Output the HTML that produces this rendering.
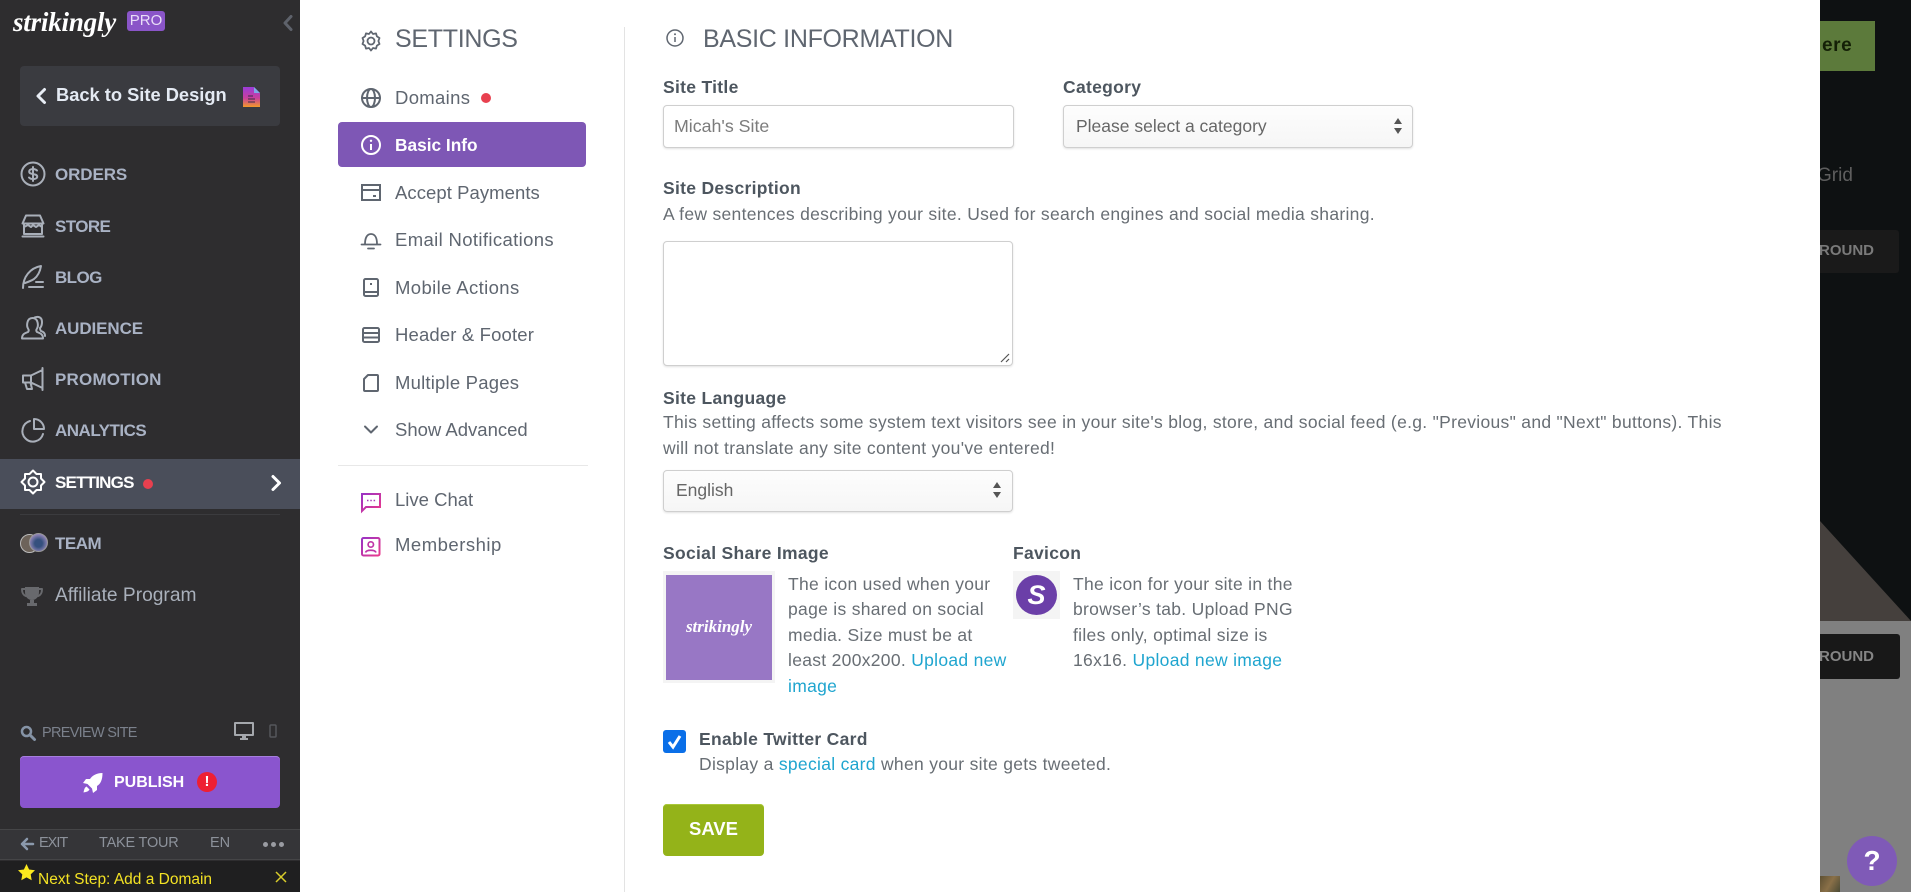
<!DOCTYPE html>
<html><head><meta charset="utf-8"><title>Settings</title>
<style>
html,body{margin:0;padding:0}
body{width:1911px;height:892px;overflow:hidden;position:relative;background:#fff;font-family:"Liberation Sans",sans-serif}
.a{position:absolute}
.t{position:absolute;white-space:nowrap;line-height:20px;height:20px}
svg{position:absolute;overflow:visible}
.s{fill:none;stroke-linecap:round;stroke-linejoin:round}
.n{color:#a9b2c4;font-weight:bold;font-size:17px;left:55px;letter-spacing:-.1px}
.i{stroke:#a9afb9;stroke-width:2}
.m{color:#5f6670;font-size:18.5px;left:395px}
.g{stroke:#5f6670;stroke-width:2}
.l{color:#4d565f;font-weight:bold;font-size:17.5px;left:663px;letter-spacing:.3px}
.h{color:#686e74;font-size:17.5px;letter-spacing:.3px}
.c{color:#1fa5cf}
.box{position:absolute;box-sizing:border-box;border:1px solid #cfcfcf;border-radius:4px;box-shadow:0 1px 2px rgba(0,0,0,.12)}
.sel{background:linear-gradient(#fdfdfd,#f6f6f6)}
</style></head><body>

<!-- right background strip -->
<div class="a" style="left:1820px;top:0;width:91px;height:892px;background:#0e1112"></div>
<div class="a" style="left:1820px;top:21px;width:55px;height:50px;background:#5c7a3b"></div>
<div class="t" style="left:1822px;top:36px;color:#142006;font-weight:bold;font-size:19px;letter-spacing:.6px">ere</div>
<div class="t" style="left:1817px;top:166px;width:70px;color:#5e5e5e;font-size:19px;clip-path:inset(0 0 0 3px)">Grid</div>
<div class="a" style="left:1820px;top:230px;width:79px;height:43px;background:#1a1a1a;border-radius:0 3px 3px 0"></div>
<div class="t" style="left:1819px;top:241px;color:#7a7a7a;font-weight:bold;font-size:15px;clip-path:inset(0 0 0 1px)">ROUND</div>
<svg style="left:0;top:0" width="1911" height="892"><polygon points="1820,521 1911,621 1820,621" fill="#45403d"/></svg>
<div class="a" style="left:1820px;top:621px;width:91px;height:271px;background:#808080"></div>
<div class="a" style="left:1820px;top:634px;width:80px;height:45px;background:#181818;border-radius:0 3px 3px 0"></div>
<div class="t" style="left:1819px;top:647px;color:#858585;font-weight:bold;font-size:15px;clip-path:inset(0 0 0 1px)">ROUND</div>
<div class="a" style="left:1820px;top:876px;width:20px;height:16px;background:linear-gradient(120deg,#5d5033,#8a7048,#4a4a35)"></div>
<div class="a" style="left:1847px;top:836px;width:50px;height:50px;border-radius:50%;background:#7f5ab7;color:#fff;font-weight:bold;font-size:28px;line-height:50px;text-align:center">?</div>

<!-- sidebar -->
<div class="a" style="left:0;top:0;width:300px;height:892px;background:#2e2d2f"></div>
<div class="t" style="left:13px;top:10px;font-family:'Liberation Serif',serif;font-style:italic;font-weight:bold;font-size:27px;color:#fff;line-height:24px;height:24px;letter-spacing:-.2px">strikingly</div>
<div class="a" style="left:127px;top:11px;width:38px;height:20px;background:#8a55c8;border-radius:3px;color:#e9ddf7;font-size:15px;line-height:20px;text-align:center">PRO</div>
<svg style="left:282px;top:15px" width="12" height="16"><path class="s" d="M9 1.500 3 8l6 6.500" stroke="#5e626b" stroke-width="3"/></svg>

<div class="a" style="left:20px;top:66px;width:260px;height:60px;background:#3a3b40;border-radius:4px"></div>
<svg style="left:35px;top:87px" width="12" height="18"><path class="s" d="M9.500 2.500 3 9l6.500 6.500" stroke="#e8edf5" stroke-width="3"/></svg>
<div class="t" style="left:56px;top:85px;color:#e4eaf3;font-weight:bold;font-size:18.3px">Back to Site Design</div>
<svg style="left:243px;top:87px" width="18" height="20"><defs><linearGradient id="gd" x1="0" y1="0" x2="0" y2="1"><stop offset="0" stop-color="#9a3cd8"/><stop offset=".55" stop-color="#c83f9e"/><stop offset="1" stop-color="#f29a28"/></linearGradient></defs><path d="M0 0h11l6 6v14H0z" fill="url(#gd)"/><path d="M11 0l6 6h-6z" fill="#7fa8e8"/><path d="M5 9h5M5 12h7M5 15h7" stroke="#3a2a4a" stroke-width="1"/></svg>

<!-- ORDERS -->
<svg style="left:20px;top:161px" width="26" height="26"><circle class="s i" cx="13" cy="13" r="11.500" stroke-width="2.500"/><path class="s i" d="M17 9.500c-1-1-2.300-1.500-4-1.500-2.200 0-3.800 1-3.800 2.600 0 3.600 8 1.400 8 5 0 1.500-1.700 2.500-4.200 2.500-1.700 0-3.100-.6-4-1.600M13 6v14"/></svg>
<div class="t n" style="top:165px">ORDERS</div>
<!-- STORE -->
<svg style="left:21px;top:214px" width="24" height="24"><path class="s i" stroke-width="1.800" d="M5 1.500h14l3.500 8H1.500zM3 9.500V20h18V9.500M3 13l4-2 3 2 2-2 3 2 3-2 3 2M1.500 22.500h21"/></svg>
<div class="t n" style="top:217px;letter-spacing:-.6px">STORE</div>
<!-- BLOG -->
<svg style="left:21px;top:265px" width="24" height="24"><path class="s i" d="M2 23C2 12 9 3 20 1c-1 6-3 10-7 13-3 2-6 3-9 4M22 22H8M22 17h-7"/></svg>
<div class="t n" style="top:268px;letter-spacing:-.6px">BLOG</div>
<!-- AUDIENCE -->
<svg style="left:21px;top:316px" width="25" height="24"><path class="s i" d="M1 22.500c0-4 2-5 6-6.500 1-1 1-2 0-3.500-1.500-2.500-1.500-10.500 4.500-10.500S17.500 10 16 12.500c-1 1.500-1 2.500 0 3.500 4 1.500 6 2.500 6 6.500zM13.500 1.500C17 0 21 1 21 6c0 3-1 5-2 6 0 1 0 2 1 3 2 .8 4 1.500 4 5"/></svg>
<div class="t n" style="top:319px">AUDIENCE</div>
<!-- PROMOTION -->
<svg style="left:21px;top:367px" width="24" height="24"><path class="s i" d="M21.500 1v22M21.500 3 10 8.500H2v7h8L21.500 21M4 15.500l2 6.500h5l-1.500-6.500M10 8.500v7"/></svg>
<div class="t n" style="top:370px;letter-spacing:.2px">PROMOTION</div>
<!-- ANALYTICS -->
<svg style="left:21px;top:418px" width="24" height="24"><path class="s i" d="M9 3a10.500 10.500 0 1 0 13 13M13 1a10 10 0 0 1 10 10H13z"/></svg>
<div class="t n" style="top:421px;letter-spacing:-.5px">ANALYTICS</div>
<!-- SETTINGS -->
<div class="a" style="left:0;top:459px;width:300px;height:50px;background:#4a4e5a"></div>
<svg style="left:20px;top:469px" width="26" height="26"><path class="s" stroke="#fff" stroke-width="2" d="M13 1.500 16.500 5H21v4.500L24.500 13 21 16.500V21h-4.500L13 24.500 9.500 21H5v-4.500L1.500 13 5 9.500V5h4.500z"/><circle class="s" stroke="#fff" stroke-width="2" cx="13" cy="13" r="4.500"/></svg>
<div class="t n" style="top:473px;color:#fff;letter-spacing:-.8px">SETTINGS</div>
<div class="a" style="left:143px;top:479px;width:10px;height:10px;border-radius:50%;background:#e8404f"></div>
<svg style="left:270px;top:474px" width="12" height="18"><path class="s" d="M3 2.500 9.500 9 3 15.500" stroke="#fff" stroke-width="3"/></svg>
<div class="a" style="left:20px;top:514px;width:260px;height:1px;background:#3b3b3e"></div>
<!-- TEAM -->
<div class="a" style="left:20px;top:534px;width:17px;height:17px;border-radius:50%;background:#6d635a;border:1px solid #bbb"></div>
<div class="a" style="left:29px;top:533px;width:17px;height:17px;border-radius:50%;background:radial-gradient(circle at 50% 55%,#35507e 30%,#8f84b5 70%);border:1px solid #999"></div>
<div class="t n" style="top:534px;letter-spacing:-.5px">TEAM</div>
<!-- Affiliate -->
<svg style="left:21px;top:586px" width="22" height="22"><path d="M4 1h14v5c0 5-3 8-7 8S4 11 4 6z" fill="#68696d"/><path class="s" d="M4 3H1c0 4 1 6 4 7M18 3h3c0 4-1 6-4 7" stroke="#68696d" stroke-width="2"/><path d="M9 14h4v3h3v3H6v-3h3z" fill="#68696d"/></svg>
<div class="t" style="left:55px;top:586px;color:#a9b0bb;font-size:19.2px">Affiliate Program</div>
<!-- preview -->
<svg style="left:20px;top:725px" width="16" height="16"><circle class="s" cx="6.500" cy="6.500" r="4.500" stroke="#8593a6" stroke-width="2.500"/><path class="s" d="M10 10l4.500 4.500" stroke="#8593a6" stroke-width="3"/></svg>
<div class="t" style="left:42px;top:723px;color:#7b818c;font-size:14.500px;letter-spacing:-.7px">PREVIEW SITE</div>
<svg style="left:234px;top:722px" width="20" height="18"><rect class="s" x="1" y="1" width="18" height="12" stroke="#a5a8ad" stroke-width="2"/><path d="M8 14h4v2h2v2H6v-2h2z" fill="#a5a8ad"/></svg>
<svg style="left:269px;top:724px" width="8" height="14"><rect x="1" y="1" width="6" height="12" rx="1" fill="none" stroke="#55575c" stroke-width="1.500"/></svg>
<!-- publish -->
<div class="a" style="left:20px;top:756px;width:260px;height:52px;background:#8a55ce;border-radius:4px;box-shadow:inset 0 1px 0 #a67fdd"></div>
<svg style="left:83px;top:773px" width="20" height="20"><path d="M19.500 0C13 0 9 3 7 6H3L0 10l4.500 1 4.500 4.500 1 4.500 4-3v-4c3.500-2 5.500-6 5.500-13z" fill="#fff"/><path d="M3.500 13.500C1.500 14.500 1 17 .5 19.500c2.500-.5 5-1 6-3z" fill="#fff"/></svg>
<div class="t" style="left:114px;top:773px;color:#fff;font-weight:bold;font-size:16px">PUBLISH</div>
<div class="a" style="left:197px;top:772px;width:20px;height:20px;border-radius:50%;background:#ee1f33;color:#fff;font-weight:bold;font-size:15px;line-height:20px;text-align:center">!</div>
<!-- exit bar -->
<div class="a" style="left:0;top:829px;width:300px;height:31px;background:#353538;border-top:1px solid #454547;border-bottom:1px solid #454547;box-sizing:border-box"></div>
<svg style="left:20px;top:837px" width="14" height="14"><path class="s" d="M13 7H2M7 2 2 7l5 5" stroke="#8b99ac" stroke-width="2.500"/></svg>
<div class="t" style="left:39px;top:833px;color:#8d929b;font-size:14.500px;letter-spacing:-1px">EXIT</div>
<div class="t" style="left:99px;top:833px;color:#8d929b;font-size:14.500px;letter-spacing:-.2px">TAKE TOUR</div>
<div class="t" style="left:210px;top:833px;color:#8d929b;font-size:14.500px">EN</div>
<div class="a" style="left:263px;top:842px;width:5px;height:5px;border-radius:50%;background:#9a9ca2;box-shadow:8px 0 0 #9a9ca2,16px 0 0 #9a9ca2"></div>
<!-- next step -->
<div class="a" style="left:0;top:861px;width:300px;height:31px;background:#1f1f20"></div>
<svg style="left:18px;top:864px" width="17" height="17"><path d="M8.500 0l2.600 5.500 5.900.8-4.300 4.100 1 5.900-5.200-2.900-5.200 2.900 1-5.900L0 6.300l5.900-.8z" fill="#fbe91e"/></svg>
<div class="t" style="left:38px;top:870px;color:#f3e224;font-size:15.500px">Next Step: Add a Domain</div>
<svg style="left:275px;top:871px" width="12" height="12"><path d="M1 1l10 10M11 1 1 11" stroke="#d9cd2a" stroke-width="1.500"/></svg>

<!-- settings nav -->
<svg style="left:360px;top:30px" width="22" height="22"><path class="s" stroke="#5f6670" stroke-width="1.800" d="M11 1.500l2 2.500 3-.6.900 3 2.600 1.600-1.100 3 1.100 3-2.600 1.600-.9 3-3-.6-2 2.500-2-2.500-3 .6-.9-3-2.600-1.600 1.100-3-1.100-3L5.100 6.400l.9-3 3 .6z"/><circle class="s" stroke="#5f6670" stroke-width="1.800" cx="11" cy="11" r="3.500"/></svg>
<div class="t" style="left:395px;top:28px;color:#5f6670;font-size:25px;line-height:22px;height:22px;letter-spacing:-.3px">SETTINGS</div>

<svg style="left:361px;top:88px" width="20" height="20"><circle class="s g" cx="10" cy="10" r="9"/><ellipse class="s g" cx="10" cy="10" rx="4" ry="9"/><path class="s g" d="M1 10h18"/></svg>
<div class="t m" style="top:88px;letter-spacing:.33px">Domains</div>
<div class="a" style="left:481px;top:93px;width:10px;height:10px;border-radius:50%;background:#e8404f"></div>

<div class="a" style="left:338px;top:122px;width:248px;height:45px;background:#7e57b5;border-radius:4px"></div>
<svg style="left:361px;top:135px" width="20" height="20"><circle class="s" stroke="#fff" stroke-width="2" cx="10" cy="10" r="9"/><path d="M10 9v6" stroke="#fff" stroke-width="2"/><circle cx="10" cy="5.800" r="1.200" fill="#fff"/></svg>
<div class="t m" style="top:135px;color:#fff;font-weight:bold;font-size:17.300px">Basic Info</div>

<svg style="left:361px;top:184px" width="20" height="18"><rect x="1" y="1" width="18" height="15" fill="none" stroke="#5f6670" stroke-width="2"/><path d="M1 6h18M12 12h3" stroke="#5f6670" stroke-width="2"/></svg>
<div class="t m" style="top:183px;letter-spacing:.06px">Accept Payments</div>

<svg style="left:361px;top:230px" width="20" height="20"><path class="s" stroke="#5f6670" stroke-width="1.800" d="M4 14c0-6 2-10 6-10s6 4 6 10M0.500 14.500h19M7 18.500h6"/></svg>
<div class="t m" style="top:230px;letter-spacing:.36px">Email Notifications</div>

<svg style="left:363px;top:278px" width="16" height="20"><rect x="1" y="1" width="14" height="17" rx="1.500" fill="none" stroke="#5f6670" stroke-width="2"/><path d="M1 14h14M8 5v2" stroke="#5f6670" stroke-width="2"/></svg>
<div class="t m" style="top:278px;letter-spacing:.38px">Mobile Actions</div>

<svg style="left:362px;top:327px" width="18" height="16"><rect x="1" y="1" width="16" height="14" rx="1.500" fill="none" stroke="#5f6670" stroke-width="2"/><path d="M1 6h16M1 10.500h16" stroke="#5f6670" stroke-width="2"/></svg>
<div class="t m" style="top:325px;letter-spacing:.15px">Header &amp; Footer</div>

<svg style="left:363px;top:374px" width="16" height="18"><path class="s g" d="M5 1h9a1 1 0 0 1 1 1v14a1 1 0 0 1-1 1H2a1 1 0 0 1-1-1V5z"/></svg>
<div class="t m" style="top:373px;letter-spacing:.2px">Multiple Pages</div>

<svg style="left:364px;top:425px" width="14" height="10"><path class="s g" d="M1 1.500l6 6 6-6"/></svg>
<div class="t m" style="top:420px">Show Advanced</div>

<div class="a" style="left:338px;top:465px;width:250px;height:1px;background:#e8e8e8"></div>

<svg style="left:361px;top:493px" width="20" height="19"><defs><linearGradient id="pk" x1="0" y1="0" x2="1" y2="1"><stop offset="0" stop-color="#9a33c4"/><stop offset="1" stop-color="#ea3a8c"/></linearGradient></defs><path d="M1 1h18v13H5l-4 4z" fill="none" stroke="url(#pk)" stroke-width="2"/><path d="M6 7.500h1.500M9.300 7.500h1.500M12.600 7.500h1.500" stroke="#a83cb8" stroke-width="1.500"/></svg>
<div class="t m" style="top:490px">Live Chat</div>

<svg style="left:361px;top:537px" width="20" height="20"><rect x="1" y="1" width="17.500" height="17.500" rx="1.500" fill="none" stroke="url(#pk)" stroke-width="2"/><circle cx="9.800" cy="7.500" r="2.700" fill="none" stroke="#c035a8" stroke-width="1.700"/><path d="M4.500 15.500c1-3 9.500-3 10.500 0" fill="none" stroke="#c035a8" stroke-width="1.700"/></svg>
<div class="t m" style="top:535px;letter-spacing:.5px">Membership</div>

<div class="a" style="left:624px;top:27px;width:1px;height:865px;background:#e3e3e3"></div>

<!-- main form -->
<svg style="left:666px;top:29px" width="18" height="18"><circle class="s" stroke="#5f6670" stroke-width="1.500" cx="9" cy="9" r="8"/><path d="M9 8v5" stroke="#5f6670" stroke-width="1.500"/><circle cx="9" cy="5.200" r="1" fill="#5f6670"/></svg>
<div class="t" style="left:703px;top:28px;color:#5f6670;font-size:25px;line-height:22px;height:22px;letter-spacing:-.3px">BASIC INFORMATION</div>

<div class="t l" style="top:77px">Site Title</div>
<div class="t l" style="top:77px;left:1063px">Category</div>
<div class="box" style="left:663px;top:105px;width:351px;height:43px;background:#fff"></div>
<div class="t" style="left:674px;top:116px;color:#7c7c7c;font-size:17.800px">Micah's Site</div>
<div class="box sel" style="left:1063px;top:105px;width:350px;height:43px"></div>
<div class="t" style="left:1076px;top:116px;color:#666;font-size:17.500px">Please select a category</div>
<svg style="left:1393px;top:118px" width="10" height="17"><path d="M5 0l4 6H1zM5 16l4-6H1z" fill="#555"/></svg>

<div class="t l" style="top:178px">Site Description</div>
<div class="t h" style="left:663px;top:204px">A few sentences describing your site. Used for search engines and social media sharing.</div>
<div class="box" style="left:663px;top:241px;width:350px;height:125px;background:#fff"></div>
<svg style="left:1000px;top:353px" width="10" height="10"><path d="M1 9l8-8M6 9l3-3" stroke="#555" stroke-width="1.200"/></svg>

<div class="t l" style="top:388px">Site Language</div>
<div class="t h" style="left:663px;top:412px">This setting affects some system text visitors see in your site's blog, store, and social feed (e.g. "Previous" and "Next" buttons). This</div>
<div class="t h" style="left:663px;top:438px">will not translate any site content you've entered!</div>
<div class="box sel" style="left:663px;top:470px;width:350px;height:42px"></div>
<div class="t" style="left:676px;top:480px;color:#666;font-size:17.500px">English</div>
<svg style="left:992px;top:482px" width="10" height="17"><path d="M5 0l4 6H1zM5 16l4-6H1z" fill="#555"/></svg>

<div class="t l" style="top:543px">Social Share Image</div>
<div class="a" style="left:663px;top:571px;width:112px;height:112px;background:#f4f4f4"></div>
<div class="a" style="left:666px;top:575px;width:106px;height:105px;background:#9877c5"></div>
<div class="t" style="left:666px;top:617px;width:106px;text-align:center;color:#fff;font-family:'Liberation Serif',serif;font-style:italic;font-weight:bold;font-size:17px">strikingly</div>
<div class="t h" style="left:788px;top:574px">The icon used when your</div>
<div class="t h" style="left:788px;top:599px">page is shared on social</div>
<div class="t h" style="left:788px;top:625px">media. Size must be at</div>
<div class="t h" style="left:788px;top:650px">least 200x200. <span class="c">Upload new</span></div>
<div class="t h c" style="left:788px;top:676px">image</div>

<div class="t l" style="top:543px;left:1013px">Favicon</div>
<div class="a" style="left:1013px;top:571px;width:47px;height:48px;background:#f4f4f4"></div>
<div class="a" style="left:1016px;top:575px;width:41px;height:40px;border-radius:50%;background:#6b3fa8;color:#fff;font-style:italic;font-weight:bold;font-size:27px;line-height:40px;text-align:center">S</div>
<div class="t h" style="left:1073px;top:574px">The icon for your site in the</div>
<div class="t h" style="left:1073px;top:599px">browser’s tab. Upload PNG</div>
<div class="t h" style="left:1073px;top:625px">files only, optimal size is</div>
<div class="t h" style="left:1073px;top:650px">16x16. <span class="c">Upload new image</span></div>

<div class="a" style="left:663px;top:730px;width:23px;height:23px;background:#0a6fe8;border-radius:3px"></div>
<svg style="left:663px;top:730px" width="23" height="23"><path d="M6 12l4 5 7-11" fill="none" stroke="#fff" stroke-width="3"/></svg>
<div class="t l" style="left:699px;top:729px">Enable Twitter Card</div>
<div class="t h" style="left:699px;top:754px">Display a <span class="c">special card</span> when your site gets tweeted.</div>

<div class="a" style="left:663px;top:804px;width:101px;height:52px;background:#94b319;border-radius:4px;box-shadow:inset 0 1px 0 #aac83a;color:#fff;font-weight:bold;font-size:18.500px;line-height:50px;text-align:center">SAVE</div>
</body></html>
